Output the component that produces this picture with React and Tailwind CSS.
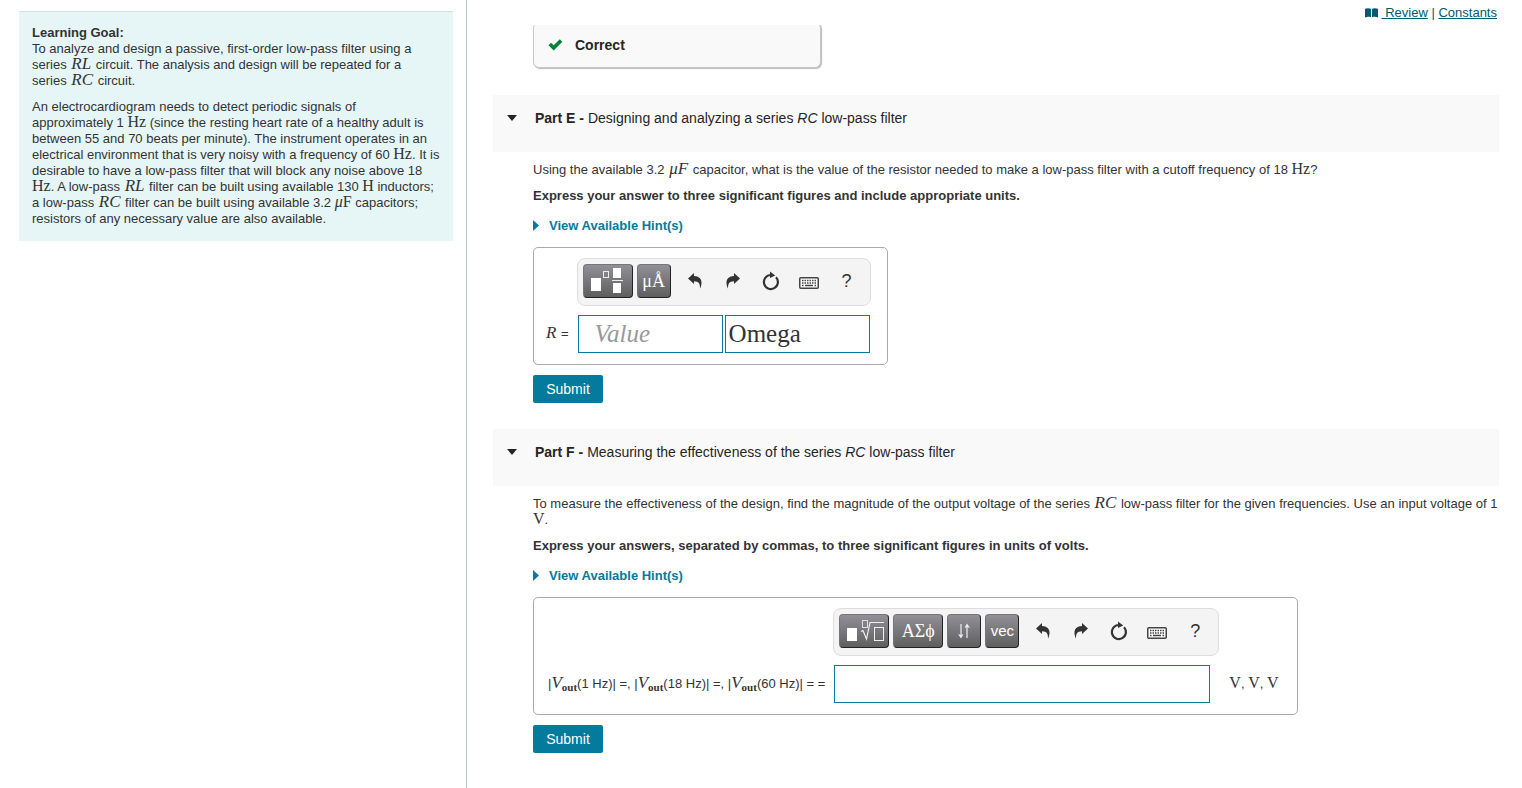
import React, { useState } from 'react';

const M = ({ children, italic }) => (
  <span
    className={
      italic
        ? 'font-["Liberation_Serif",serif] text-[17px] leading-[0] italic px-px'
        : 'font-["Liberation_Serif",serif] text-[16px] leading-[0]'
    }
  >
    {children}
  </span>
);

const BookIcon = () => (
  <svg width="13" height="11" viewBox="0 0 13 11" className="inline-block mr-1" aria-hidden="true">
    <path d="M0 .8C2 0 4.300 0 6 .8V9.200C4.300 8.600 2 8.600 0 9.400Z" fill="#005a70" />
    <path d="M13 .8C11 0 8.700 0 7 .8V9.200C8.700 8.600 11 8.600 13 9.400Z" fill="#005a70" />
  </svg>
);

const CheckIcon = () => (
  <svg width="15" height="12" viewBox="0 0 15 12" aria-hidden="true">
    <path d="M0.500 6.200L3 3.700L5.700 6.300L11.800 0.300L14.300 2.700L5.700 11.400Z" fill="#038238" />
  </svg>
);

const CaretDown = () => (
  <svg width="10" height="6" viewBox="0 0 10 6" aria-hidden="true">
    <path d="M0 0H10L5 6Z" fill="#252525" />
  </svg>
);

const CaretRight = () => (
  <svg width="6" height="12" viewBox="0 0 6 12" aria-hidden="true">
    <path d="M0 0L6 5.500L0 11Z" fill="#047a9c" />
  </svg>
);

const UndoIcon = () => (
  <svg width="14" height="16" viewBox="0 0 14 16" aria-hidden="true">
    <path d="M0 5.500L6 0V3C10.800 3.200 13.800 5.800 13.500 10.200C13.400 12.300 12.800 14 12 15.500C12.200 10.800 11 8.300 6 8.200V11Z" fill="#333" />
  </svg>
);

const RedoIcon = () => (
  <svg width="14" height="16" viewBox="0 0 14 16" aria-hidden="true">
    <path d="M14 5.500L8 0V3C3.200 3.200 .2 5.800 .5 10.200C.6 12.300 1.200 14 2 15.500C1.800 10.800 3 8.300 8 8.200V11Z" fill="#333" />
  </svg>
);

const ResetIcon = () => (
  <svg width="18" height="20" viewBox="0 0 18 20" aria-hidden="true">
    <path d="M9 4A7 7 0 1 0 14 6.200" fill="none" stroke="#333" strokeWidth="2.200" />
    <path d="M8 0.500L13.200 4.500L8 7Z" fill="#333" />
  </svg>
);

const KeyboardIcon = () => (
  <svg width="20" height="16" viewBox="0 -4 20 16" aria-hidden="true">
    <rect x="0.750" y="0.750" width="18.500" height="10.500" rx="1" fill="#fff" stroke="#444" strokeWidth="1.500" />
    <path d="M3 3.500H17M3 6H17" stroke="#444" strokeWidth="1.500" strokeDasharray="1.500 1" />
    <path d="M3 8.500H4.500M6 8.500H14M15.500 8.500H17" stroke="#444" strokeWidth="1.500" />
  </svg>
);

const TemplateFractionIcon = () => (
  <svg width="48" height="32" viewBox="1 1 48 32" aria-hidden="true">
    <rect x="8" y="14" width="10" height="13" fill="#fff" />
    <rect x="20.500" y="7.500" width="5" height="6" fill="none" stroke="#eee" />
    <rect x="30" y="4" width="8" height="10" fill="#fff" />
    <path d="M29 16.500H40" stroke="#eee" />
    <rect x="30" y="19" width="8" height="10" fill="#fff" />
  </svg>
);

const TemplateRootIcon = () => (
  <svg width="48" height="32" viewBox="1 1 48 32" aria-hidden="true">
    <rect x="8" y="14" width="10" height="13" fill="#fff" />
    <rect x="23.500" y="6.500" width="5" height="7" fill="none" stroke="#ddd" />
    <path d="M22 17.500L24 16.500L27.500 25L31 8.500H45" fill="none" stroke="#eee" strokeWidth="1.200" />
    <rect x="35.500" y="13.500" width="9" height="13" fill="none" stroke="#eee" />
  </svg>
);

const ArrowsIcon = () => (
  <svg width="14" height="16" viewBox="0 0 14 16" aria-hidden="true">
    <path d="M4 1V13M10 15V3" stroke="#eee" strokeWidth="1.200" />
    <path d="M1 11L4 12L6.500 11L4 15.500ZM7.500 5L10 4L13 5L10 .5Z" fill="#eee" />
  </svg>
);

const KEY =
  'h-[34px] flex items-center justify-center rounded border border-t-[#77757c] border-l-[#77757c] border-r-[#222] border-b-[#222] bg-linear-to-b from-[#929097] to-[#5f5f5f] text-white';

function Toolbar({ children }) {
  const tools = [
    { label: 'Undo', icon: <UndoIcon /> },
    { label: 'Redo', icon: <RedoIcon /> },
    { label: 'Reset', icon: <ResetIcon /> },
    { label: 'Keyboard shortcuts', icon: <KeyboardIcon /> },
    { label: 'Help', icon: <span className="text-[18px] leading-none">?</span> },
  ];

  return (
    <div className="w-max h-12 flex items-start pt-[5px] pl-[5px] pr-1 border border-[#ddd] rounded-lg bg-[#f4f4f4]">
      <div className="flex gap-1 mr-[5px]">{children}</div>
      {tools.map((tool) => (
        <button key={tool.label} aria-label={tool.label} className="w-[38px] h-[34px] flex items-center justify-center text-[#333]">
          {tool.icon}
        </button>
      ))}
    </div>
  );
}

function Part({ name, title, children }) {
  const [open, setOpen] = useState(true);

  return (
    <section className="mb-[26px]">
      <h2 className="bg-[#f9f9f9] h-[57px] px-[14px] pt-[14px] text-[14px] leading-[18px] text-[#252525]">
        <button onClick={() => setOpen(!open)} aria-expanded={open} className="flex items-center gap-[18px] text-left">
          <CaretDown />
          <span>
            <strong>{name} - </strong>
            {title}
          </span>
        </button>
      </h2>
      {open && <div className="pl-10 pt-[10px]">{children}</div>}
    </section>
  );
}

const Hints = () => (
  <button className="flex items-center gap-[10px] mt-[14px] mb-[13px] font-bold text-[#047a9c]">
    <CaretRight /> View Available Hint(s)
  </button>
);

const Submit = () => (
  <button className="block w-[70px] h-7 mt-[10px] rounded-xs bg-[#047a9c] text-white text-[14px]">Submit</button>
);

const FIELD = 'h-[38px] border border-[#047a9c] bg-white font-["Liberation_Serif",serif] text-[25px] text-[#333] outline-none';

const Vout = ({ hz }) => (
  <>
    |<span className='font-["Liberation_Serif",serif] text-[17px] leading-[0] italic'>V</span>
    <sub className='font-["Liberation_Serif",serif] text-[11px] font-bold leading-[0]'>out</sub>({hz} Hz)| =
  </>
);

function App() {
  return (
    <div className='flex min-h-screen bg-white font-["Liberation_Sans",Arial,sans-serif] text-[13px] leading-4 text-[#333]'>
      {/* Problem introduction */}
      <aside className="w-[467px] shrink-0 border-r border-[#b8c6d6] pl-[19px] pr-[13px] pt-[11px]">
        <div className="bg-[#e6f6f7] border-t border-[#d5dfe1] px-[13px] pt-[13px] pb-[14px]">
          <p>
            <strong>Learning Goal:</strong>
            <br />
            To analyze and design a passive, first-order low-pass filter using a series <M italic>RL</M> circuit. The
            analysis and design will be repeated for a series&nbsp;<M italic>RC</M> circuit.
          </p>
          <p className="mt-[10px]">
            An electrocardiogram needs to detect periodic signals of approximately 1 <M>Hz</M> (since the resting heart
            rate of a healthy adult is between 55 and 70 beats per minute). The instrument operates in an electrical
            environment that is very noisy with a frequency of 60 <M>Hz</M>. It is desirable to have a low-pass filter
            that will block any noise above 18 <M>Hz</M>. A low-pass <M italic>RL</M> filter can be built using
            available 130 <M>H</M> inductors; a low-pass <M italic>RC</M> filter can be built using available 3.2{' '}
            <M><i>μ</i>F</M> capacitors; resistors of any necessary value are also available.
          </p>
        </div>
      </aside>

      <main className="flex-1 min-w-0 pl-[26px] pr-[23px]">
        <nav className="h-[25px] pt-[5px] pr-0.5 text-right text-[#005a70] whitespace-nowrap">
          <BookIcon />
          <a href="#review" className="underline">&nbsp;Review</a> | <a href="#constants" className="underline">Constants</a>
        </nav>

        {/* Result of the previous part, scrolled partly under the nav */}
        <div className="overflow-hidden ml-10 mb-[25px] pb-0.5">
          <div className="w-[288px] h-[46px] -mt-[3px] pl-[14px] flex items-center gap-3 border border-[#c7c7c7] rounded-md bg-[#f9f9f9] shadow-[1px_1px_1px_#bbb] text-[14px] font-bold text-[#252525]">
            <CheckIcon /> Correct
          </div>
        </div>

        <Part name="Part E" title={<>Designing and analyzing a series <i>RC</i> low-pass filter</>}>
          <p>
            Using the available 3.2 <M italic>μF</M> capacitor, what is the value of the resistor needed to make a
            low-pass filter with a cutoff frequency of 18 <M>Hz</M>?
          </p>
          <p className="mt-[10px] font-bold">
            Express your answer to three significant figures and include appropriate units.
          </p>
          <Hints />
          <div className="w-max grid grid-cols-[auto_auto] items-center gap-x-2 gap-y-[9px] border border-[#aaa] rounded-[5px] pl-[11px] pr-4 pt-[10px] pb-[11px]">
            <div className="col-start-2">
              <Toolbar>
                <button aria-label="Templates" className={`${KEY} w-[50px]`}><TemplateFractionIcon /></button>
                <button aria-label="Units" className={`${KEY} w-[34px] font-["Liberation_Serif",serif] text-[18px]`}>μÅ</button>
              </Toolbar>
            </div>
            <label htmlFor="r-value" className="col-start-1"><M italic>R</M> =</label>
            <div className="flex gap-0.5 px-px">
              <input id="r-value" placeholder="Value" className={`${FIELD} w-[145px] px-4 placeholder:italic placeholder:text-[#999]`} />
              <input aria-label="Units" defaultValue="Omega" className={`${FIELD} w-[145px] px-[3px]`} />
            </div>
          </div>
          <Submit />
        </Part>

        <Part name="Part F" title={<>Measuring the effectiveness of the series <i>RC</i> low-pass filter</>}>
          <p>
            To measure the effectiveness of the design, find the magnitude of the output voltage of the series{' '}
            <M italic>RC</M> low-pass filter for the given frequencies. Use an input voltage of 1 <M>V</M>.
          </p>
          <p className="mt-[10px] font-bold">
            Express your answers, separated by commas, to three significant figures in units of volts.
          </p>
          <Hints />
          <div className="w-max grid grid-cols-[auto_auto_auto] items-center gap-x-2 gap-y-[9px] border border-[#aaa] rounded-[5px] pl-[14px] pr-4 pt-[10px] pb-[11px]">
            <div className="col-start-2">
              <Toolbar>
                <button aria-label="Templates" className={`${KEY} w-[50px]`}><TemplateRootIcon /></button>
                <button aria-label="Greek letters" className={`${KEY} w-[50px] font-["Liberation_Serif",serif] text-[18px]`}>ΑΣϕ</button>
                <button aria-label="Arrows" className={`${KEY} w-[34px]`}><ArrowsIcon /></button>
                <button aria-label="Vectors" className={`${KEY} w-[34px] text-[15px]`}>vec</button>
              </Toolbar>
            </div>
            <label htmlFor="v-out" className="col-start-1 whitespace-nowrap">
              <Vout hz="1" />, <Vout hz="18" />, <Vout hz="60" /> =
            </label>
            <div className="px-px">
              <input id="v-out" className={`${FIELD} block w-[376px] px-2`} />
            </div>
            <span className="px-0.5"><M>V</M>, <M>V</M>, <M>V</M></span>
          </div>
          <Submit />
        </Part>
      </main>
    </div>
  );
}

export default App;
